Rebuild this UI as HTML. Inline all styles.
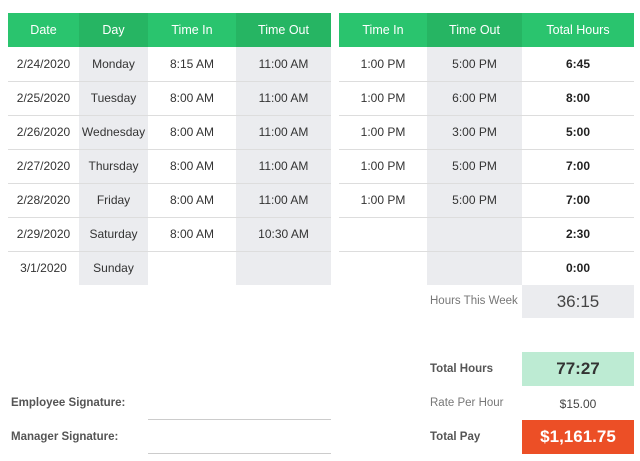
<!DOCTYPE html>
<html><head><meta charset="utf-8"><style>
*{margin:0;padding:0;box-sizing:border-box}
body{width:640px;height:461px;background:#fff;font-family:"Liberation Sans",Arial,sans-serif;position:relative;overflow:hidden;color:#333}
table{position:absolute;border-collapse:collapse;table-layout:fixed}
td,th{height:34px;text-align:center;font-size:12px;padding:0;white-space:nowrap}
th{background:#2ac46e;color:#fff;font-weight:normal;font-size:12.5px}
th.d{background:#26b563}
td{border-bottom:1px solid #ddd}
tr:last-child td{border-bottom:none}
td.g{background:#ebecef}
td.b{font-weight:bold;color:#222}
.a{position:absolute}
</style></head><body>
<table style="left:8px;top:13px;width:323px">
<colgroup><col style="width:71px"><col style="width:69px"><col style="width:88px"><col style="width:95px"></colgroup>
<tr><th>Date</th><th class="d">Day</th><th>Time In</th><th class="d">Time Out</th></tr>
<tr><td>2/24/2020</td><td class="g">Monday</td><td>8:15 AM</td><td class="g">11:00 AM</td></tr>
<tr><td>2/25/2020</td><td class="g">Tuesday</td><td>8:00 AM</td><td class="g">11:00 AM</td></tr>
<tr><td>2/26/2020</td><td class="g">Wednesday</td><td>8:00 AM</td><td class="g">11:00 AM</td></tr>
<tr><td>2/27/2020</td><td class="g">Thursday</td><td>8:00 AM</td><td class="g">11:00 AM</td></tr>
<tr><td>2/28/2020</td><td class="g">Friday</td><td>8:00 AM</td><td class="g">11:00 AM</td></tr>
<tr><td>2/29/2020</td><td class="g">Saturday</td><td>8:00 AM</td><td class="g">10:30 AM</td></tr>
<tr><td>3/1/2020</td><td class="g">Sunday</td><td></td><td class="g"></td></tr>
</table>
<table style="left:339px;top:13px;width:295px">
<colgroup><col style="width:88px"><col style="width:95px"><col style="width:112px"></colgroup>
<tr><th>Time In</th><th class="d">Time Out</th><th>Total Hours</th></tr>
<tr><td>1:00 PM</td><td class="g">5:00 PM</td><td class="b">6:45</td></tr>
<tr><td>1:00 PM</td><td class="g">6:00 PM</td><td class="b">8:00</td></tr>
<tr><td>1:00 PM</td><td class="g">3:00 PM</td><td class="b">5:00</td></tr>
<tr><td>1:00 PM</td><td class="g">5:00 PM</td><td class="b">7:00</td></tr>
<tr><td>1:00 PM</td><td class="g">5:00 PM</td><td class="b">7:00</td></tr>
<tr><td></td><td class="g"></td><td class="b">2:30</td></tr>
<tr><td></td><td class="g"></td><td class="b">0:00</td></tr>
</table>
<div class="a" style="left:430px;top:295px;font-size:11.5px;color:#777">Hours This Week</div>
<div class="a" style="left:522px;top:285px;width:112px;height:33px;background:#ebecef;font-size:17px;text-align:center;line-height:33px;color:#444">36:15</div>
<div class="a" style="left:430px;top:363px;font-size:11.5px;font-weight:bold;color:#555">Total Hours</div>
<div class="a" style="left:522px;top:352px;width:112px;height:34px;background:#bdebd3;font-size:17px;font-weight:bold;text-align:center;line-height:34px;color:#333">77:27</div>
<div class="a" style="left:430px;top:397px;font-size:11.5px;color:#777">Rate Per Hour</div>
<div class="a" style="left:522px;top:397px;width:112px;font-size:12px;text-align:center;color:#444">$15.00</div>
<div class="a" style="left:430px;top:431px;font-size:11.5px;font-weight:bold;color:#555">Total Pay</div>
<div class="a" style="left:522px;top:420px;width:112px;height:34px;background:#ec4f26;font-size:17px;font-weight:bold;text-align:center;line-height:34px;color:#fff">$1,161.75</div>
<div class="a" style="left:11px;top:397px;font-size:11.5px;font-weight:bold;color:#555">Employee Signature:</div>
<div class="a" style="left:148px;top:419px;width:183px;height:1px;background:#ccc"></div>
<div class="a" style="left:11px;top:431px;font-size:11.5px;font-weight:bold;color:#555">Manager Signature:</div>
<div class="a" style="left:148px;top:453px;width:183px;height:1px;background:#ccc"></div>
</body></html>
